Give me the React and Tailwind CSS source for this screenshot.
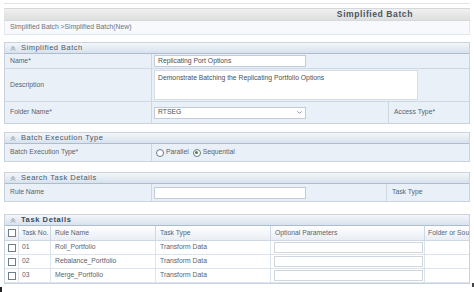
import { ChevronDown } from 'lucide-react';

function Collapse() {
  return (
    <svg width="6" height="6" viewBox="0 0 6 6" className="shrink-0">
      <path d="M1 3.5 L3 1.5 L5 3.5" fill="none" stroke="#7d8a99" strokeWidth="0.9" />
      <path d="M1 5.5 L3 3.5 L5 5.5" fill="none" stroke="#7d8a99" strokeWidth="0.9" />
    </svg>
  );
}

function SectionHeader({ title, bold }) {
  return (
    <div className="flex h-[11px] items-center gap-[5px] border-b border-[#aebdcd] bg-gradient-to-b from-[#f3f6fa] to-[#d8e2ed] pl-[5px]">
      <Collapse />
      <span
        className={
          bold
            ? 'text-[7.5px] font-bold tracking-[0.6px] text-[#3b4a5a]'
            : 'text-[7.5px] tracking-[0.5px] text-[#4a596a]'
        }
      >
        {title}
      </span>
    </div>
  );
}

function Label({ children, className = '' }) {
  return (
    <div className={`flex w-[147px] shrink-0 items-center border-r border-[#cfd8e2] pl-[5px] text-[6.8px] text-[#5a636e] ${className}`}>
      {children}
    </div>
  );
}

function Input({ value, className = '' }) {
  return (
    <div className={`flex h-[12px] items-center border border-[#c3ccd6] bg-white pl-[3px] text-[6.8px] text-[#4a4f56] ${className}`}>
      {value}
    </div>
  );
}

function Radio({ checked, label }) {
  return (
    <div className="flex items-center gap-[2px]">
      <div className="flex h-[8px] w-[8px] items-center justify-center rounded-full border border-[#6c7887] bg-white">
        {checked && <div className="h-[3px] w-[3px] rounded-full bg-[#3d8a3a]" />}
      </div>
      <span className="text-[6.8px] text-[#5a636e]">{label}</span>
    </div>
  );
}

function Check() {
  return <div className="h-[8px] w-[8px] border border-[#6f7c8a] bg-white" />;
}

const tasks = [
  { no: '01', rule: 'Roll_Portfolio', type: 'Transform Data' },
  { no: '02', rule: 'Rebalance_Portfolio', type: 'Transform Data' },
  { no: '03', rule: 'Merge_Portfolio', type: 'Transform Data' },
];

export default function App() {
  return (
    <div className="relative h-[292px] w-[474px] overflow-hidden bg-white font-['Liberation_Sans',Arial,sans-serif]">
      <div className="ml-[4px] mt-[3px] w-[466px] border-t border-[#dfe3e8]">
        {/* title bar */}
        <div className="mt-[4px] flex h-[13px] items-center justify-end border-y border-[#d4d8dc] bg-gradient-to-b from-[#f0f0f0] to-[#dedede] pr-[57px]">
          <span className="text-[8.6px] font-bold tracking-[0.55px] text-[#4a5563]">Simplified Batch</span>
        </div>
        <div className="flex h-[14px] items-center border-x border-b border-[#e2e7ec] bg-[#f7f9fc] pl-[5px] text-[6.8px] text-[#6a737d]">
          Simplified Batch &gt;Simplified Batch(New)
        </div>

        {/* Simplified Batch */}
        <div className="mt-[7px] border border-[#c9d3de]">
          <SectionHeader title="Simplified Batch" />
          <div className="flex h-[15px] border-b border-[#cfd8e2] bg-[#eaf0f7]">
            <Label>Name*</Label>
            <div className="flex items-center pl-[2px]">
              <Input value="Replicating Port Options" className="w-[152px]" />
            </div>
          </div>
          <div className="flex h-[33px] border-b border-[#cfd8e2] bg-[#eaf0f7]">
            <Label>Description</Label>
            <div className="flex items-stretch py-[1px] pl-[2px]">
              <div className="w-[264px] border border-[#d5dce4] bg-white pl-[3px] pt-[2px] text-[6.8px] text-[#4a4f56]">
                Demonstrate Batching the Replicating Portfolio Options
              </div>
            </div>
          </div>
          <div className="flex h-[21px] bg-[#eaf0f7]">
            <Label>Folder Name*</Label>
            <div className="flex w-[237px] items-center border-r border-[#cfd8e2] pl-[2px]">
              <div className="flex h-[12px] w-[152px] items-center justify-between border border-[#c3ccd6] bg-white pl-[3px] pr-[2px] text-[6.8px] text-[#4a4f56]">
                RTSEG
                <ChevronDown size={7} strokeWidth={3} color="#6a7f9a" />
              </div>
            </div>
            <div className="flex items-center pl-[5px] text-[6.8px] text-[#5a636e]">Access Type*</div>
          </div>
        </div>

        {/* Batch Execution Type */}
        <div className="mt-[8px] border border-[#c9d3de]">
          <SectionHeader title="Batch Execution Type" />
          <div className="flex h-[17px] bg-[#eaf0f7]">
            <Label>Batch Execution Type*</Label>
            <div className="flex items-center gap-[4px] pl-[4px]">
              <Radio label="Parallel" />
              <Radio checked label="Sequential" />
            </div>
          </div>
        </div>

        {/* Search Task Details */}
        <div className="mt-[10px] border border-[#c9d3de]">
          <SectionHeader title="Search Task Details" />
          <div className="flex h-[17px] bg-[#eaf0f7]">
            <Label>Rule Name</Label>
            <div className="flex w-[235px] items-center border-r border-[#cfd8e2] pl-[2px]">
              <Input value="" className="w-[152px]" />
            </div>
            <div className="flex items-center pl-[5px] text-[6.8px] text-[#5a636e]">Task Type</div>
          </div>
        </div>

        {/* Task Details */}
        <div className="mt-[12px] overflow-hidden border border-[#c9d3de]">
          <SectionHeader title="Task Details" bold />
          <div className="flex h-[15px] border-b border-[#cfd8e2] bg-gradient-to-b from-[#ffffff] to-[#e9eef4] text-[6.8px] text-[#5a636e]">
            <div className="flex w-[14px] shrink-0 items-center justify-center border-r border-[#cfd8e2]"><Check /></div>
            <div className="flex w-[32px] shrink-0 items-center border-r border-[#cfd8e2] pl-[3px]">Task No.</div>
            <div className="flex w-[105px] shrink-0 items-center border-r border-[#cfd8e2] pl-[4px]">Rule Name</div>
            <div className="flex w-[115px] shrink-0 items-center border-r border-[#cfd8e2] pl-[4px]">Task Type</div>
            <div className="flex w-[154px] shrink-0 items-center border-r border-[#cfd8e2] pl-[4px]">Optional Parameters</div>
            <div className="flex shrink-0 items-center whitespace-nowrap pl-[3px]">Folder or Source</div>
          </div>
          {tasks.map((t) => (
            <div key={t.no} className="flex h-[14px] border-b border-[#dde3ea] bg-white text-[6.8px] text-[#5a636e]">
              <div className="flex w-[14px] shrink-0 items-center justify-center border-r border-[#dde3ea]"><Check /></div>
              <div className="flex w-[32px] shrink-0 items-center border-r border-[#dde3ea] pl-[3px]">{t.no}</div>
              <div className="flex w-[105px] shrink-0 items-center border-r border-[#dde3ea] pl-[4px]">{t.rule}</div>
              <div className="flex w-[115px] shrink-0 items-center border-r border-[#dde3ea] pl-[4px]">{t.type}</div>
              <div className="flex w-[154px] shrink-0 items-center border-r border-[#dde3ea] pl-[3px]">
                <div className="h-[11px] w-[149px] border border-[#cfd6de] bg-white" />
              </div>
              <div className="flex-1" />
            </div>
          ))}
        </div>
      </div>
      <div className="absolute bottom-0 left-0 h-[5px] w-[2px] bg-[#222]" />
      <div className="absolute right-0 top-[283px] h-[4px] w-[2px] bg-[#444]" />
    </div>
  );
}
